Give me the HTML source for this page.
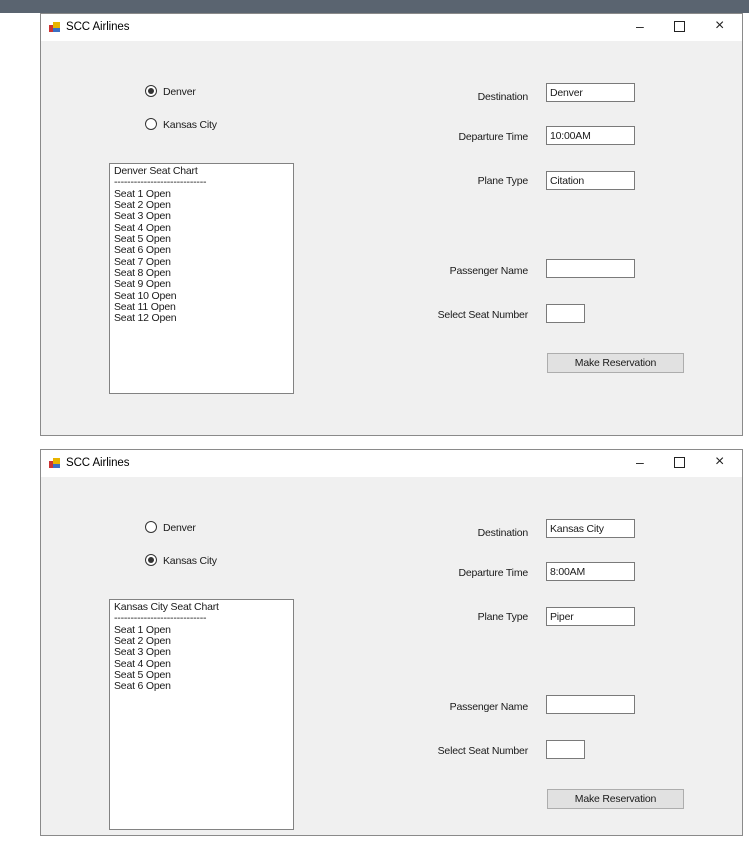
<!DOCTYPE html>
<html><head><meta charset="utf-8"><style>
*{margin:0;padding:0;box-sizing:border-box}
body{width:749px;height:848px;background:#fff;position:relative;overflow:hidden;font-family:"Liberation Sans",sans-serif;font-size:10.5px;color:#1a1a1a;letter-spacing:-0.2px}
.top{position:absolute;left:0;top:0;width:749px;height:13px;background:#5a6470}
.win{position:absolute;left:40px;width:703px;background:#f0f0f0;border:1px solid #8a8a8a}
.tb{position:absolute;left:0;top:0;width:701px;height:27px;background:#fff}
.ttl{position:absolute;left:25px;top:7px;font-size:11.5px;letter-spacing:-0.1px;color:#000}
.ic{position:absolute;left:8px;top:8px;width:11px;height:11px}
.ctl{position:absolute;top:4px;font-size:14px;color:#222}
.a{position:absolute;white-space:nowrap}
.rad{position:absolute;width:12px;height:12px;border:1px solid #333;border-radius:50%;background:#fff}
.rad.on::after{content:"";position:absolute;left:2px;top:2px;width:6px;height:6px;border-radius:50%;background:#333}
.tx{position:absolute;width:89px;height:19px;background:#fff;border:1px solid #7a7a7a;padding:3px 0 0 3px}
.lb{position:absolute;left:68px;width:185px;height:231px;background:#fff;border:1px solid #828282;padding:2px 0 0 4px;line-height:11.35px}
.lbl{position:absolute;right:214px;white-space:nowrap;text-align:right}
.btn{position:absolute;left:506px;width:137px;height:20px;background:#e1e1e1;border:1px solid #adadad;text-align:center;line-height:18px}
</style></head><body>
<div class="top"></div>

<div class="win" style="top:13px;height:423px">
 <div class="tb">
  <svg class="ic" viewBox="0 0 11 11"><rect x="0" y="3" width="4" height="7" fill="#c33"/><rect x="4" y="0" width="7" height="6" fill="#e8b400"/><rect x="4" y="6" width="7" height="4" fill="#3a6fc4"/></svg>
  <div class="ttl">SCC Airlines</div>
  <div class="ctl" style="left:595px">&#8211;</div>
  <div class="ctl" style="left:633px;top:7px;width:11px;height:11px;border:1px solid #222"></div>
  <div class="ctl" style="left:674px;top:3px;font-size:16px">&#215;</div>
 </div>
 <div class="rad on" style="left:104px;top:71px"></div><div class="a" style="left:122px;top:72px">Denver</div>
 <div class="rad" style="left:104px;top:104px"></div><div class="a" style="left:122px;top:105px">Kansas City</div>
 <div class="lb" style="top:149px">Denver Seat Chart<br>----------------------------<br>Seat 1 Open<br>Seat 2 Open<br>Seat 3 Open<br>Seat 4 Open<br>Seat 5 Open<br>Seat 6 Open<br>Seat 7 Open<br>Seat 8 Open<br>Seat 9 Open<br>Seat 10 Open<br>Seat 11 Open<br>Seat 12 Open</div>
 <div class="lbl" style="top:77px">Destination</div>
 <div class="lbl" style="top:117px">Departure Time</div>
 <div class="lbl" style="top:161px">Plane Type</div>
 <div class="lbl" style="top:251px">Passenger Name</div>
 <div class="lbl" style="top:295px">Select Seat Number</div>
 <div class="tx" style="left:505px;top:69px">Denver</div>
 <div class="tx" style="left:505px;top:112px">10:00AM</div>
 <div class="tx" style="left:505px;top:157px">Citation</div>
 <div class="tx" style="left:505px;top:245px"></div>
 <div class="tx" style="left:505px;top:290px;width:39px"></div>
 <div class="btn" style="top:339px">Make Reservation</div>
</div>

<div class="win" style="top:449px;height:387px;border-bottom:1px solid #8a8a8a">
 <div class="tb">
  <svg class="ic" viewBox="0 0 11 11"><rect x="0" y="3" width="4" height="7" fill="#c33"/><rect x="4" y="0" width="7" height="6" fill="#e8b400"/><rect x="4" y="6" width="7" height="4" fill="#3a6fc4"/></svg>
  <div class="ttl">SCC Airlines</div>
  <div class="ctl" style="left:595px">&#8211;</div>
  <div class="ctl" style="left:633px;top:7px;width:11px;height:11px;border:1px solid #222"></div>
  <div class="ctl" style="left:674px;top:3px;font-size:16px">&#215;</div>
 </div>
 <div class="rad" style="left:104px;top:71px"></div><div class="a" style="left:122px;top:72px">Denver</div>
 <div class="rad on" style="left:104px;top:104px"></div><div class="a" style="left:122px;top:105px">Kansas City</div>
 <div class="lb" style="top:149px">Kansas City Seat Chart<br>----------------------------<br>Seat 1 Open<br>Seat 2 Open<br>Seat 3 Open<br>Seat 4 Open<br>Seat 5 Open<br>Seat 6 Open</div>
 <div class="lbl" style="top:77px">Destination</div>
 <div class="lbl" style="top:117px">Departure Time</div>
 <div class="lbl" style="top:161px">Plane Type</div>
 <div class="lbl" style="top:251px">Passenger Name</div>
 <div class="lbl" style="top:295px">Select Seat Number</div>
 <div class="tx" style="left:505px;top:69px">Kansas City</div>
 <div class="tx" style="left:505px;top:112px">8:00AM</div>
 <div class="tx" style="left:505px;top:157px">Piper</div>
 <div class="tx" style="left:505px;top:245px"></div>
 <div class="tx" style="left:505px;top:290px;width:39px"></div>
 <div class="btn" style="top:339px">Make Reservation</div>
</div>
</body></html>
